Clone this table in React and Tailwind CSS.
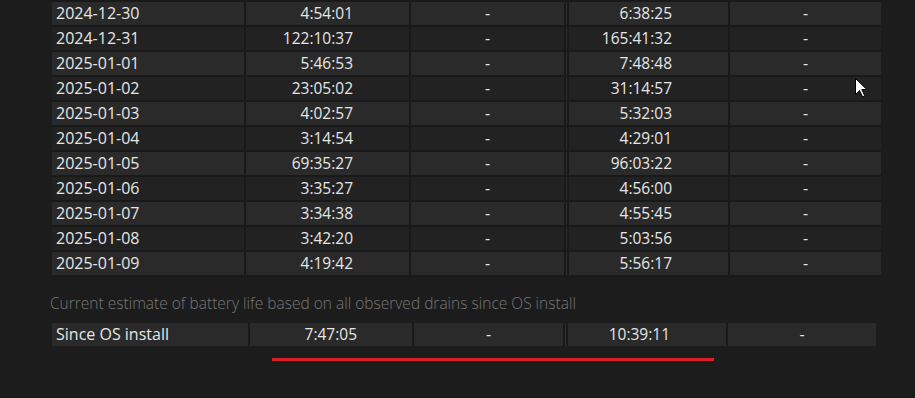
const rows = [
  ['2024-12-30', '4:54:01', '6:38:25'],
  ['2024-12-31', '122:10:37', '165:41:32'],
  ['2025-01-01', '5:46:53', '7:48:48'],
  ['2025-01-02', '23:05:02', '31:14:57'],
  ['2025-01-03', '4:02:57', '5:32:03'],
  ['2025-01-04', '3:14:54', '4:29:01'],
  ['2025-01-05', '69:35:27', '96:03:22'],
  ['2025-01-06', '3:35:27', '4:56:00'],
  ['2025-01-07', '3:34:38', '4:55:45'],
  ['2025-01-08', '3:42:20', '5:03:56'],
  ['2025-01-09', '4:19:42', '5:56:17'],
];

function Cursor() {
  return (
    <svg className="absolute left-[855px] top-[78px]" width="13" height="20" viewBox="0 0 13 20">
      <path d="M0.5 0.5 L0.5 16.5 L4.5 12.5 L7.5 18.8 L9.8 17.8 L6.8 11.5 L11.8 11.5 Z" fill="#ffffff" stroke="#000000" strokeWidth="1" />
    </svg>
  );
}

function App() {
  return (
    <div
      className="relative h-[398px] w-[915px] overflow-hidden bg-[#1c1c1c] text-[16px] text-[#e6e6e6]"
      style={{ fontFamily: '"Open Sans", "Noto Sans", sans-serif' }}
    >
      <div className="ml-[52px] flex w-[829px] flex-col gap-[2px] bg-[#191919] py-[2px]">
        {rows.map(([date, a, b], i) => {
          const bg = i % 2 === 0 ? 'bg-[#2a2a2a]' : 'bg-[#222222]';
          return (
            <div key={date} className="flex h-[23px] gap-[2px] leading-[23px]">
              <div className={`w-[192px] pl-[4px] ${bg}`}>{date}</div>
              <div className={`w-[163px] pr-[56px] text-right text-[15.5px] ${bg}`}>{a}</div>
              <div className={`w-[153px] text-center ${bg}`}>-</div>
              <div className="w-[1px] bg-[#303030]" />
              <div className={`w-[159px] pr-[56px] text-right text-[15.5px] ${bg}`}>{b}</div>
              <div className={`w-[151px] text-center ${bg}`}>-</div>
            </div>
          );
        })}
      </div>

      <p className="ml-[50px] mt-[16px] h-[20px] text-[15.5px] font-light leading-[20px] text-[#777777]">
        Current estimate of battery life based on all observed drains since OS install
      </p>

      <div className="ml-[52px] mt-[10px] flex h-[23px] w-[824px] gap-[2px] bg-[#191919] leading-[23px]">
        <div className="w-[196px] bg-[#2a2a2a] pl-[4px]">Since OS install</div>
        <div className="w-[162px] bg-[#2a2a2a] pr-[55px] text-right text-[15.5px]">7:47:05</div>
        <div className="w-[149px] bg-[#2a2a2a] text-center">-</div>
        <div className="w-[1px] bg-[#303030]" />
        <div className="w-[158px] bg-[#2a2a2a] pr-[56px] text-right text-[15.5px]">10:39:11</div>
        <div className="w-[148px] bg-[#2a2a2a] text-center">-</div>
      </div>

      <div className="ml-[272px] mt-[12px] h-[3px] w-[442px] bg-[#d9222b]" />

      <Cursor />
    </div>
  );
}

export default App;
